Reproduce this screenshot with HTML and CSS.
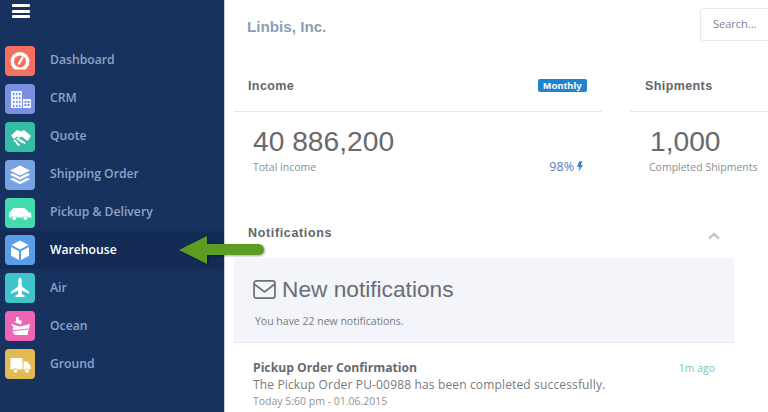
FILE: index.html
```html
<!DOCTYPE html>
<html lang="en">
<head>
<meta charset="utf-8">
<title>Linbis</title>
<link rel="stylesheet" href="styles.css">
</head>
<body>
<div class="app">
  <aside class="sidebar">
    <div class="burger"><span></span><span></span><span></span></div>
    <nav class="menu">
      <a class="item"><span class="ico c-dash"><svg viewBox="0 0 30 30"><circle cx="15" cy="15.500" r="9.500" fill="#fff"/><circle cx="15" cy="15.500" r="6" fill="#f4705f"/><path d="M14 17.500 17.500 11.500" fill="none" stroke="#fff" stroke-width="2.200" stroke-linecap="round"/><path d="M10.500 23.500h9v2.500h-9z" fill="#f4705f"/></svg></span><span class="label">Dashboard</span></a>
      <a class="item"><span class="ico c-crm"><svg viewBox="0 0 30 30"><path fill="#f2f4fd" fill-rule="evenodd" d="M6 7h11v17H6zM8 9v2h1.500V9zm3 0v2h1.500V9zm3 0v2h1.500V9zM8 13v2h1.500v-2zm3 0v2h1.500v-2zm3 0v2h1.500v-2zM8 17v2h1.500v-2zm3 0v2h1.500v-2zm3 0v2h1.500v-2zM8 21v2h1.500v-2zm3 0v2h1.500v-2zm3 0v2h1.500v-2z"/><path fill="#f2f4fd" fill-rule="evenodd" d="M18 15h8v9h-8zm1.500 2v2h2v-2zm3 0v2h2v-2zm-3 3v2h2v-2zm3 0v2h2v-2z"/></svg></span><span class="label">CRM</span></a>
      <a class="item"><span class="ico c-quote"><svg viewBox="0 0 30 30"><path fill="#fff" d="M6 13.500 12 8l4 1.500L19 8l7 6-3.500 5-6-4.500-2 1.500-2.500-1.500L9 17z"/><path fill="none" stroke="#fff" stroke-width="2" stroke-linecap="round" d="M9.500 18.500l2 1.500M12.500 16.500 17 20M12 21.500l2 1.500M16 18.500l3.500 2.500"/></svg></span><span class="label">Quote</span></a>
      <a class="item"><span class="ico c-ship"><svg viewBox="0 0 30 30"><path fill="#fff" d="M15 5.500 25 10.500 15 15.500 5 10.500zM7.500 13.200 15 17l7.500-3.800L25 14.700l-10 5-10-5zM7.500 17.700 15 21.500l7.500-3.800L25 19.200l-10 5-10-5z"/></svg></span><span class="label">Shipping Order</span></a>
      <a class="item"><span class="ico c-pick"><svg viewBox="0 0 30 30"><path fill="#fff" d="M8.500 10h11l4 4 2.500 1 .5 4.500H23a3 3 0 0 0-5.500 0h-5.500a3 3 0 0 0-5.500 0H4V15z"/><circle cx="9.300" cy="20" r="2" fill="#fff"/><circle cx="20.300" cy="20" r="2" fill="#fff"/></svg></span><span class="label">Pickup &amp; Delivery</span></a>
      <a class="item active"><span class="ico c-ware"><svg viewBox="0 0 30 30"><path fill="#fff" d="M15 5.500 23.500 10 15 14.500 6.500 10zM6 12l8 4.200V25L6 20.800zM24 12v8.800L16 25v-8.800z"/></svg></span><span class="label">Warehouse</span></a>
      <a class="item"><span class="ico c-air"><svg viewBox="0 0 30 30"><path fill="#fff" d="M15 4.500c1 0 1.700 1.500 1.700 3l.2 6 7.100 5.300v2l-7.100-3.300-.2 3.500 2.800 1.500V24h-9v-1.500l2.800-1.500-.2-3.500L6 20.800v-2l7.100-5.300.2-6c0-1.500.7-3 1.700-3z"/></svg></span><span class="label">Air</span></a>
      <a class="item"><span class="ico c-ocean"><svg viewBox="0 0 30 30"><path fill="#fff" d="M11 6h2.500l.5 3 3 1-1 3.500-7-2.500 2-1zM6 13l9 2.500L25 13l-2.500 11H11c-2 0-3-2-3-4l-1 0 1.500-3.500z"/><path fill="#ec66b4" d="M7 19.300 23.500 17.500v1L7 20.300z"/></svg></span><span class="label">Ocean</span></a>
      <a class="item"><span class="ico c-ground"><svg viewBox="0 0 30 30"><path fill="#fff" d="M5.500 9h12v11.500h-5a3 3 0 0 0-4-.5l-3 .5zM18.500 12.500h3.500l3.500 4v4H24a3 3 0 0 0-4 0h-1.500z"/><circle cx="10.500" cy="22" r="1.800" fill="#fff"/><circle cx="22" cy="22" r="1.800" fill="#fff"/></svg></span><span class="label">Ground</span></a>
    </nav>
  </aside>
  <main class="content">
    <header class="topbar">
      <h1 class="brand">Linbis, Inc.</h1>
      <div class="search">Search...</div>
    </header>
    <section class="stats">
      <div class="panel income">
        <div class="panel-head"><h2>Income</h2><span class="badge">Monthly</span></div>
        <div class="panel-body">
          <div class="value">40 886,200</div>
          <div class="foot"><span class="caption">Total income</span><span class="pct">98% <svg class="bolt" viewBox="0 0 8 14"><path fill="#3d7fc4" d="M3 0h4L5.200 5H8L2 14l1.300-6.500H0z"/></svg></span></div>
        </div>
      </div>
      <div class="panel shipments">
        <div class="panel-head"><h2>Shipments</h2></div>
        <div class="panel-body">
          <div class="value">1,000</div>
          <div class="foot"><span class="caption">Completed Shipments</span></div>
        </div>
      </div>
    </section>
    <section class="notes">
      <div class="notes-head"><h2>Notifications</h2><svg class="chev" viewBox="0 0 12 8"><path d="M1 6.500 6 2l5 4.500" fill="none" stroke="#c4c6c8" stroke-width="2.400"/></svg></div>
      <div class="banner">
        <div class="banner-title"><svg class="env" viewBox="0 0 24 20"><rect x="1" y="1" width="22" height="18" rx="2.500" fill="none" stroke="#6b7078" stroke-width="1.800"/><path d="M1.500 4.500 12 12.500 22.500 4.500" fill="none" stroke="#6b7078" stroke-width="1.800"/></svg><span>New notifications</span></div>
        <p>You have 22 new notifications.</p>
      </div>
      <article class="note">
        <div class="note-top"><h3>Pickup Order Confirmation</h3><span class="ago">1m ago</span></div>
        <div class="note-text">The Pickup Order PU-00988 has been completed successfully.</div>
        <div class="note-date">Today 5:60 pm - 01.06.2015</div>
      </article>
    </section>
  </main>
  <svg class="arrow" viewBox="0 0 85 28"><path fill="#5c9c22" d="M0 14 28 0v8h51.500a5.500 5.500 0 0 1 0 11H28v9z"/></svg>
</div>
</body>
</html>
```
FILE: styles.css
```css
* { box-sizing: border-box; }
html, body { margin: 0; height: 100%; overflow: hidden; }
body { background: #fff; font-family: "Open Sans", sans-serif; }
h1, h2, h3, p { margin: 0; }
.app { position: relative; display: flex; width: 768px; height: 412px; overflow: hidden; }

.sidebar { width: 225px; flex: none; background: #17325f; border-right: 1px solid #c9ced6; }
.burger { display: flex; flex-direction: column; gap: 2.500px; width: 18px; margin: 4px 0 0 12px; }
.burger span { height: 3px; background: #fff; border-radius: 1px; }
.menu { display: flex; flex-direction: column; margin-top: 24px; }
.item { display: flex; align-items: center; height: 37.900px; padding-left: 5px; gap: 15px; color: #8fa3c6; font-size: 12.200px; font-weight: 600; }
.item.active { background: #132b55; color: #fff; }
.label { margin-top: -2px; }
.ico { display: flex; align-items: center; justify-content: center; width: 30px; height: 30px; border-radius: 4px; }
.ico svg { width: 30px; height: 30px; }
.c-dash { background: #f4705f; }
.c-crm { background: #7b8fe0; }
.c-quote { background: #36bda5; }
.c-ship { background: #78a2e2; }
.c-pick { background: #43dcae; }
.c-ware { background: #5a9fe6; }
.c-air { background: #3fc4cc; }
.c-ocean { background: #ec66b4; }
.c-ground { background: #e3bb55; }

.content { flex: 1; min-width: 0; padding-left: 9px; }
.topbar { display: flex; align-items: center; justify-content: space-between; height: 32px; margin-top: 8px; padding-left: 13px; }
.brand { font: bold 15.200px "Liberation Sans", sans-serif; color: #8e9cb8; margin-top: 4px; }
.search { width: 80px; height: 33px; margin-right: -12px; padding: 7px 0 0 12px; border: 1px solid #e6e8ec; border-radius: 3px 0 0 3px; font-size: 11px; color: #7d8494; }

.stats { display: flex; gap: 28px; margin-top: 24px; }
.panel { flex: none; }
.income { width: 368px; }
.shipments { width: 160px; }
.panel-head { display: flex; align-items: center; justify-content: space-between; height: 48px; padding: 0 15px 4px 14px; border-bottom: 1px solid #e6e6e6; }
.shipments .panel-head { padding-left: 15px; }
.panel-head h2, .notes-head h2 { font: bold 12.500px "Liberation Sans", sans-serif; color: #62666a; letter-spacing: .4px; }
.notes-head h2 { letter-spacing: .65px; }
.badge { padding: 0 5px; height: 13px; border-radius: 2px; background: #1f84cf; color: #fff; font: bold 9.800px/13px "Liberation Sans", sans-serif; letter-spacing: .2px; }
.panel-body { padding: 12px 19px 0; }
.shipments .panel-body { padding: 12px 0 0 20px; }
.value { font: 28.200px/34px "Liberation Sans", sans-serif; color: #67696d; }
.foot { display: flex; justify-content: space-between; align-items: center; margin-top: 1px; height: 16px; font-size: 10.500px; color: #8a8e94; }
.shipments .foot { margin-left: -1px; white-space: nowrap; }
.pct { display: flex; align-items: center; gap: 3px; margin-top: -2px; font-size: 12.500px; color: #4a83c4; font-weight: 500; }
.bolt { width: 6px; height: 11px; }

.notes { width: 500px; margin-top: 45px; }
.notes-head { display: flex; justify-content: space-between; align-items: center; width: 500px; height: 26px; margin-bottom: 12px; padding: 0 14px; }
.chev { width: 12px; height: 8px; margin-top: 6px; }
.banner { height: 85px; padding: 17px 20px 0 19px; width: 500px; background: #f3f5fa; border-bottom: 1px solid #e4e7ee; }
.banner-title { display: flex; align-items: center; gap: 6px; font: 22.700px/28px "Liberation Sans", sans-serif; color: #696d74; }
.env { width: 23px; height: 19px; }
.banner p { margin-top: 11px; padding-left: 2px; font-size: 10.500px; color: #777b82; }
.note { padding: 16px 19px 0; }
.note-top { display: flex; justify-content: space-between; align-items: center; }
.note h3 { font-size: 12.200px; font-weight: 700; color: #666a70; }
.ago { font-size: 10.500px; color: #7fc4a8; }
.note-text { font-size: 12px; line-height: 17px; color: #777b80; letter-spacing: .15px; }
.note-date { font-size: 10.500px; line-height: 17px; color: #8f9399; }

.arrow { position: absolute; left: 179px; top: 236px; width: 85px; height: 28px; filter: drop-shadow(1px 1px 1px rgba(0,0,0,.35)); }
```
